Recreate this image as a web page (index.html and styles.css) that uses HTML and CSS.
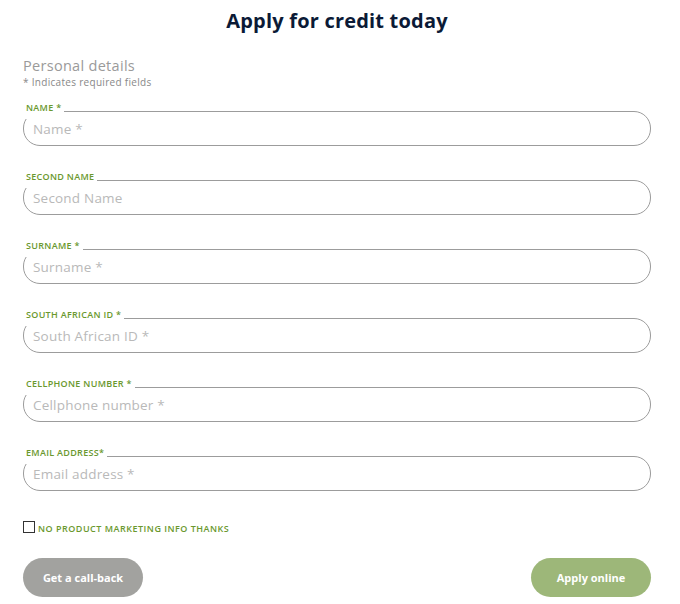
FILE: index.html
```html
<!DOCTYPE html>
<html lang="en">
<head>
<meta charset="utf-8">
<title>Apply for credit today</title>
<link rel="stylesheet" href="styles.css">
</head>
<body>
<main class="page">
  <h1 class="title">Apply for credit today</h1>
  <form class="form">
    <h2 class="section">Personal details</h2>
    <p class="hint">* Indicates required fields</p>

    <fieldset class="field">
      <legend class="label">NAME *</legend>
      <input class="input" type="text" placeholder="Name *">
    </fieldset>
    <fieldset class="field">
      <legend class="label">SECOND NAME</legend>
      <input class="input" type="text" placeholder="Second Name">
    </fieldset>
    <fieldset class="field">
      <legend class="label">SURNAME *</legend>
      <input class="input" type="text" placeholder="Surname *">
    </fieldset>
    <fieldset class="field">
      <legend class="label">SOUTH AFRICAN ID *</legend>
      <input class="input" type="text" placeholder="South African ID *">
    </fieldset>
    <fieldset class="field">
      <legend class="label">CELLPHONE NUMBER *</legend>
      <input class="input" type="text" placeholder="Cellphone number *">
    </fieldset>
    <fieldset class="field">
      <legend class="label">EMAIL ADDRESS*</legend>
      <input class="input" type="text" placeholder="Email address *">
    </fieldset>

    <label class="check">
      <span class="box"></span>
      <span class="check-text">NO PRODUCT MARKETING INFO THANKS</span>
    </label>

    <div class="actions">
      <button type="button" class="btn btn-grey">Get a call-back</button>
      <button type="button" class="btn btn-green">Apply online</button>
    </div>
  </form>
</main>
</body>
</html>
```

FILE: styles.css
```css
* { box-sizing: border-box; }

html, body {
  margin: 0;
  padding: 0;
  background: #ffffff;
}

body {
  font-family: "Open Sans", "Noto Sans", "Liberation Sans", sans-serif;
  color: #333;
}

.page {
  width: 628px;
  margin-left: 23px;
}

.title {
  margin: 0;
  padding-top: 8px;
  height: 57px;
  text-align: center;
  font-size: 20px;
  line-height: 26px;
  font-weight: 700;
  color: #0b1a36;
  letter-spacing: 0.2px;
}

.form {
  display: flex;
  flex-direction: column;
}

.section {
  margin: 0;
  font-size: 14.5px;
  line-height: 18px;
  font-weight: 400;
  color: #9a9a9a;
  letter-spacing: 0.3px;
}

.hint {
  margin: 1px 0 14px;
  font-size: 10px;
  line-height: 13px;
  color: #888;
  letter-spacing: 0.3px;
}

.field {
  margin: 0 0 26px;
  padding: 0;
  border: 1px solid #9c9c9c;
  border-radius: 17px;
  min-width: 0;
}

.label {
  margin: 0;
  padding: 0 3px 7px 2px;
  font-size: 9px;
  line-height: 9px;
  font-weight: 600;
  color: #6a982e;
  letter-spacing: 0.3px;
}

.input {
  display: block;
  width: 100%;
  height: 26px;
  margin: 0;
  padding: 0 10px 7px 9px;
  border: 0;
  background: transparent;
  outline: none;
  font-family: inherit;
  font-size: 13.5px;
  line-height: 19px;
  letter-spacing: 0.2px;
  color: #444;
}

.input::placeholder {
  color: #b9b9b9;
}

.check {
  display: flex;
  align-items: center;
  gap: 3px;
  margin-top: 2px;
}

.box {
  width: 12px;
  height: 12px;
  border: 1px solid #333;
  background: #fff;
  flex: none;
}

.check-text {
  font-size: 9px;
  line-height: 12px;
  font-weight: 600;
  color: #6a982e;
  padding-top: 4px;
  letter-spacing: 0.5px;
}

.actions {
  display: flex;
  justify-content: space-between;
  margin-top: 23px;
}

.btn {
  width: 120px;
  height: 39px;
  border: 0;
  border-radius: 20px;
  font-family: inherit;
  font-size: 11px;
  font-weight: 700;
  color: #ffffff;
  padding: 0;
}

.btn-grey {
  background: #a2a29f;
}

.btn-green {
  background: #9db779;
}
```
